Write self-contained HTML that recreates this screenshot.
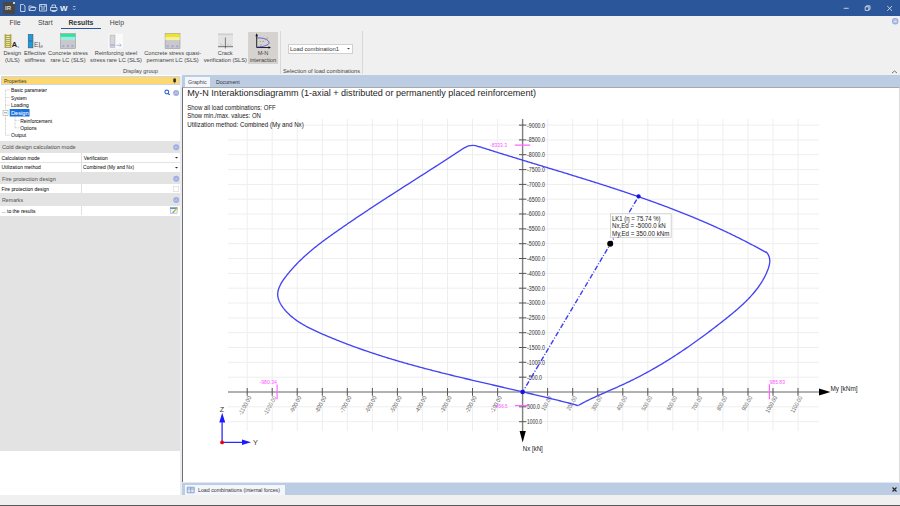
<!DOCTYPE html>
<html><head><meta charset="utf-8">
<style>
*{margin:0;padding:0;box-sizing:border-box}
html,body{width:900px;height:506px;overflow:hidden;background:#f0f0f0;font-family:"Liberation Sans",sans-serif;color:#222}
.a{position:absolute}
.t{position:absolute;white-space:nowrap;line-height:1}
#title{left:0;top:0;width:900px;height:16px;background:#2b579a}
#menu{left:0;top:16px;width:900px;height:59px;background:#f0f0f0}
.rl{position:absolute;font-size:5.7px;color:#444;text-align:center;white-space:nowrap;line-height:7.4px}
</style></head><body>
<div class="a" id="title"></div>
<!-- logo -->
<div class="a" style="left:3px;top:2px;width:12px;height:12px;background:#4a4844;border-radius:1px"></div>
<div class="t" style="left:5px;top:5px;font-size:6px;color:#ddd;font-weight:bold">IR</div>
<div class="a" style="left:12.5px;top:1.5px;width:2px;height:2px;background:#fff;border-radius:1px"></div>
<!-- quick access icons -->
<svg class="a" style="left:0;top:0" width="100" height="16" viewBox="0 0 100 16">
<g fill="none" stroke="#dfe6f2" stroke-width="0.8">
<path d="M20.5 4.5h3l1.5 1.5v5.5h-4.5z"/>
<path d="M29 6v4.5h6l1-3h-5.5l-1 3M29 6h2.5l.5 .8h2.5v.7"/>
<path d="M39.5 4.5h7v6.5h-7z M41 4.5v2.5h4v-2.5 M41 9h4"/>
<path d="M50.5 7.5h6.5v3h-6.5z M52 7.5v-2.5h3.5v2.5 M52 10.5v1h3.5v-1"/>
</g>
<text x="60" y="11" font-size="8" font-weight="bold" fill="#f2f2f2" font-family="Liberation Sans">W</text>
<path d="M73 6.5h2.5 M73 8.5l1.25 1.5 1.25-1.5" stroke="#dde" stroke-width="0.7" fill="none"/>
</svg>
<!-- window controls -->
<svg class="a" style="left:830px;top:0" width="70" height="16" viewBox="830 0 70 16">
<path d="M843.7 8.3h5" stroke="#e6ebf3" stroke-width="0.8"/>
<path d="M865.2 6.8h3.6v3.6h-3.6z M866.4 6.8v-1h3.6v3.6h-1.2" stroke="#e6ebf3" stroke-width="0.8" fill="none"/>
<path d="M887.2 6l4.8 4.8 M892 6l-4.8 4.8" stroke="#e6ebf3" stroke-width="0.8"/>
</svg>
<!-- menu tabs -->
<div class="t" style="left:9.5px;top:20.2px;font-size:6.9px;color:#444">File</div>
<div class="t" style="left:38px;top:20.2px;font-size:6.9px;color:#444">Start</div>
<div class="t" style="left:68.4px;top:20.2px;font-size:6.9px;color:#333;font-weight:bold">Results</div>
<div class="t" style="left:109.8px;top:20.2px;font-size:6.9px;color:#444">Help</div>
<div class="a" style="left:61px;top:27.8px;width:40px;height:1.4px;background:#2b579a"></div>
<!-- help icon -->
<svg class="a" style="left:890px;top:16px" width="10" height="10"><circle cx="5.2" cy="5.3" r="3.2" fill="#98a8e0"/><circle cx="5.2" cy="5.3" r="2.2" fill="#b4c4ee"/><path d="M3.9 6.2l1.3-1.4 1.3 1.4" stroke="#f2f6ff" stroke-width="0.7" fill="none"/></svg>
<svg class="a" style="left:888px;top:68px" width="12" height="8"><path d="M4 5l2.5-2 2.5 2" stroke="#555" stroke-width="0.8" fill="none"/></svg>
<div class="a" style="left:248.3px;top:32.2px;width:29.5px;height:32.2px;background:#d5d2cf"></div>
<svg class="a" style="left:0;top:30px" width="280" height="22" viewBox="0 30 280 22" font-family="Liberation Sans">
<!-- ladder -->
<g fill="#b2aa45"><rect x="4.7" y="34.2" width="1.5" height="13.8"/><rect x="9.8" y="34.2" width="1.5" height="13.8"/><rect x="4.7" y="34.8" width="6.6" height="1.2"/><rect x="4.7" y="36.8" width="6.6" height="1.2"/><rect x="4.7" y="38.8" width="6.6" height="1.2"/><rect x="4.7" y="40.8" width="6.6" height="1.2"/><rect x="4.7" y="42.8" width="6.6" height="1.2"/><rect x="4.7" y="44.8" width="6.6" height="1.2"/><rect x="4.7" y="46.8" width="6.6" height="1.2"/></g>
<text x="11.8" y="47" font-size="7.4" font-weight="bold" fill="#222">A</text>
<text x="17.2" y="48.3" font-size="3.6" fill="#555">s</text>
<!-- effective stiffness -->
<rect x="28.2" y="34.3" width="4.8" height="13.6" fill="#1c9ae2" stroke="#4c4c4c" stroke-width="0.5"/>
<path d="M29 41h3.4" stroke="#444" stroke-width="0.6"/>
<text x="34" y="47.4" font-size="6.6" fill="#555">EI</text>
<text x="39" y="48.3" font-size="3.4" fill="#555">eff</text>
<!-- concrete rare -->
<rect x="60.4" y="33.6" width="15.1" height="14.8" fill="#c9c9c9" stroke="#8a8a8a" stroke-width="0.5"/>
<rect x="60.7" y="33.9" width="14.5" height="3" fill="#2ee49b"/>
<rect x="60.7" y="36.9" width="14.5" height="3.3" fill="#9ee9e6"/>
<g fill="#a9a6e8"><circle cx="63.3" cy="46" r="1.2"/><circle cx="67.9" cy="46" r="1.2"/><circle cx="72.4" cy="46" r="1.2"/></g>
<!-- reinforcing steel -->
<rect x="108.3" y="33.8" width="14.6" height="14.7" fill="#fafafa"/>
<rect x="110" y="35" width="5" height="12.5" fill="#d6d6d6" stroke="#9a9a9a" stroke-width="0.4"/>
<rect x="110.2" y="44.2" width="4.6" height="1.8" fill="#a8b8ee"/>
<path d="M116.5 45.3h4.5M119.6 43.8l1.6 1.5-1.6 1.5" stroke="#8b8bf0" stroke-width="0.6" fill="none"/>
<!-- concrete quasi -->
<rect x="165.1" y="33.5" width="14.9" height="15" fill="#c9c9c9" stroke="#8a8a8a" stroke-width="0.5"/>
<rect x="165.4" y="33.8" width="14.3" height="3.3" fill="#efe423"/>
<rect x="165.4" y="37.1" width="14.3" height="3" fill="#f6f0a6"/>
<g fill="#a9a6e8"><circle cx="167.8" cy="46.3" r="1.2"/><circle cx="172.5" cy="46.3" r="1.2"/><circle cx="177.2" cy="46.3" r="1.2"/></g>
<!-- crack -->
<rect x="218" y="33.5" width="15" height="14.5" fill="#e3e3e3"/>
<rect x="218" y="33.5" width="15" height="1.6" fill="#cfcfcf"/>
<path d="M218 46.6H233M225.4 37.5V48.5" stroke="#333" stroke-width="0.6"/>
<path d="M221 43v3.5M223 44.5v2M228 43.5v3M230.5 44v2.5" stroke="#a8a8a8" stroke-width="0.4"/>
<!-- M-N -->
<path d="M256.7 35V47.5H269" stroke="#111" stroke-width="0.9" fill="none"/>
<path d="M255.4 36.2L256.7 33.2L258 36.2Z M268.5 46.2L271 47.5L268.5 48.8Z" fill="#111"/>
<path d="M257 38C263 37.5 268.5 39.5 269 42.5C269.5 45 263 47 257.5 46.8" stroke="#3333dd" stroke-width="0.7" fill="none"/>
<g fill="#55aa55"><circle cx="260.2" cy="41.5" r="0.6"/><circle cx="263.2" cy="41.3" r="0.6"/><circle cx="261" cy="44.8" r="0.6"/></g>
<circle cx="267.2" cy="38.3" r="0.7" fill="#e88060"/>
</svg>

<!-- ribbon labels -->
<div class="rl" style="left:-27.7px;top:49.6px;width:80px">Design<br>(ULS)</div>
<div class="rl" style="left:-5.2px;top:49.6px;width:80px">Effective<br>stiffness</div>
<div class="rl" style="left:28.0px;top:49.6px;width:80px">Concrete stress<br>rare LC (SLS)</div>
<div class="rl" style="left:76.0px;top:49.6px;width:80px">Reinforcing steel<br>stress rare LC (SLS)</div>
<div class="rl" style="left:132.7px;top:49.6px;width:80px">Concrete stress quasi-<br>permanent LC (SLS)</div>
<div class="rl" style="left:185.3px;top:49.6px;width:80px">Crack<br>verification (SLS)</div>
<div class="rl" style="left:223.0px;top:49.6px;width:80px">M-N<br>interaction</div>
<div class="rl" style="left:100.5px;top:68px;width:80px">Display group</div>
<div class="a" style="left:280px;top:31px;width:1px;height:43px;background:#d8d8d8"></div>
<div class="a" style="left:362px;top:31px;width:1px;height:43px;background:#d8d8d8"></div>
<div class="a" style="left:288.3px;top:43.6px;width:65px;height:10px;background:#fff;border:0.7px solid #d0d0d0"></div>
<div class="t" style="left:290.3px;top:45.8px;font-size:6.2px;color:#333;transform:scaleX(0.935);transform-origin:0 0">Load combination1</div>
<svg class="a" style="left:346px;top:47px" width="6" height="4"><path d="M1 1h3l-1.5 1.5z" fill="#444"/></svg>
<div class="rl" style="left:261.5px;top:68px;width:120px">Selection of load combinations</div>

<!-- LEFT PANEL -->
<div class="a" style="left:0;top:75px;width:182px;height:420px;background:#fff"></div>
<div class="a" style="left:0.8px;top:76.2px;width:179px;height:9.2px;background:#fdd86e;border:0.7px solid #c8d6e8"></div>
<div class="t" style="left:3.5px;top:78.2px;font-size:6.1px;color:#333;transform:scaleX(0.81);transform-origin:0 0">Properties</div>
<svg class="a" style="left:171px;top:77px" width="7" height="8"><path d="M2.2 1.6h2.6v3.6h-2.6z" fill="#4a4a30"/><path d="M3.9 1.6v3.6" stroke="#111" stroke-width="1"/><path d="M3.5 5.2v1.4" stroke="#555" stroke-width="0.6"/></svg>
<svg class="a" style="left:0;top:86px" width="182" height="55" viewBox="0 86 182 55">
<g stroke="#a8a8a8" stroke-width="0.6" fill="none" stroke-dasharray="0.8 0.6">
<path d="M5.5 90V135.2 M5.5 90H10 M5.5 97.6H10 M5.5 105.2H10 M5.5 135.2H10 M15 116V127.8 M15 120.3H19.5 M15 127.8H19.5"/>
</g>
<rect x="3" y="110.3" width="5" height="5" fill="#fff" stroke="#9aa" stroke-width="0.6"/>
<path d="M4 112.8H7" stroke="#555" stroke-width="0.6"/>
<rect x="9.7" y="109" width="19.8" height="7.5" fill="#1a72d9"/>
<g font-size="5.9" fill="#222" stroke="#222" stroke-width="0.05">
<text x="11" y="92.2" textLength="35.9" lengthAdjust="spacingAndGlyphs">Basic parameter</text>
<text x="11" y="99.8" textLength="15.7" lengthAdjust="spacingAndGlyphs">System</text>
<text x="11" y="107.4" textLength="17.8" lengthAdjust="spacingAndGlyphs">Loading</text>
<text x="11" y="115" fill="#fff" stroke="#fff" textLength="17.6" lengthAdjust="spacingAndGlyphs">Design</text>
<text x="20.2" y="122.5" textLength="32" lengthAdjust="spacingAndGlyphs">Reinforcement</text>
<text x="20.2" y="130" textLength="16.6" lengthAdjust="spacingAndGlyphs">Options</text>
<text x="11" y="137.4" textLength="15.1" lengthAdjust="spacingAndGlyphs">Output</text>
</g>
<circle cx="166.8" cy="92" r="1.9" fill="none" stroke="#2f6fd0" stroke-width="1.1"/>
<path d="M168.1 93.4l1.6 1.5" stroke="#3a4fc0" stroke-width="1.3"/>
<circle cx="176.1" cy="92.9" r="3" fill="#a3aee3"/>
<path d="M174.7 93.8l1.4-1.4 1.4 1.4" stroke="#d8e4fa" stroke-width="0.7" fill="none"/>
</svg>

<div class="a" style="left:0;top:141.2px;width:180.5px;height:74.3px;background:#e3e3e3"></div>
<div class="a" style="left:0;top:152.8px;width:180.5px;height:9.2px;background:#fff"></div>
<div class="a" style="left:0;top:162.8px;width:180.5px;height:8.9px;background:#fff"></div>
<div class="a" style="left:0;top:184px;width:180.5px;height:9px;background:#fff"></div>
<div class="a" style="left:0;top:205.9px;width:180.5px;height:9.3px;background:#fff"></div>
<div class="a" style="left:81.1px;top:152.8px;width:0.7px;height:19px;background:#e0e0e0"></div>
<div class="a" style="left:81.1px;top:184px;width:0.7px;height:9px;background:#e0e0e0"></div>
<div class="a" style="left:81.1px;top:205.9px;width:0.7px;height:9.3px;background:#e0e0e0"></div>
<svg class="a" style="left:0;top:140px" width="182" height="78" viewBox="0 140 182 78">
<g font-size="5.9" fill="#5e5e5e" stroke="#5e5e5e" stroke-width="0.05">
<text x="2" y="149.3" textLength="73.7" lengthAdjust="spacingAndGlyphs">Cold design calculation mode</text>
<text x="2" y="180.6" textLength="53.8" lengthAdjust="spacingAndGlyphs">Fire protection design</text>
<text x="2" y="202" textLength="21.1" lengthAdjust="spacingAndGlyphs">Remarks</text>
</g>
<g font-size="5.9" fill="#222" stroke="#222" stroke-width="0.05">
<text x="1.5" y="159.6" textLength="38.3" lengthAdjust="spacingAndGlyphs">Calculation mode</text>
<text x="1.5" y="169.3" textLength="39.2" lengthAdjust="spacingAndGlyphs">Utilization method</text>
<text x="1.5" y="190.8" textLength="47.5" lengthAdjust="spacingAndGlyphs">Fire protection design</text>
<text x="1.5" y="212.8" textLength="34.1" lengthAdjust="spacingAndGlyphs">... to the results</text>
<text x="83.7" y="159.6" textLength="24" lengthAdjust="spacingAndGlyphs">Verification</text>
<text x="83.1" y="169.3" textLength="51" lengthAdjust="spacingAndGlyphs">Combined (My and Nx)</text>
</g>
<g fill="#a3aee3"><circle cx="176.2" cy="147.2" r="3"/><circle cx="176.2" cy="178.8" r="3"/><circle cx="176.2" cy="200" r="3"/></g>
<g fill="none" stroke="#dae5fa" stroke-width="0.7"><path d="M174.8 148.1l1.4-1.4 1.4 1.4M174.8 179.7l1.4-1.4 1.4 1.4M174.8 200.9l1.4-1.4 1.4 1.4"/></g>
<path d="M175 157h3l-1.5 1.6z M175 167h3l-1.5 1.6z" fill="#222"/>
<rect x="173.5" y="186.2" width="5.2" height="5.4" fill="#fff" stroke="#d4d4d4" stroke-width="0.6"/>
<rect x="170.3" y="207.6" width="6.8" height="5.6" fill="#f4f6fa" stroke="#7d9ac8" stroke-width="0.5"/><rect x="170.3" y="207.6" width="6.8" height="1.3" fill="#4d86d0"/>
<path d="M173.3 212.2l4.2-4.6" stroke="#c9b430" stroke-width="1.3"/><path d="M172.8 212.8l0.8-1" stroke="#333" stroke-width="0.8"/>
</svg>

<div class="a" style="left:0;top:215.5px;width:180.3px;height:235px;background:#e3e3e3"></div>

<div class="a" style="left:180.2px;top:75.5px;width:1.8px;height:419.5px;background:#e9ecf1"></div>
<!-- RIGHT: tab strip -->
<div class="a" style="left:182px;top:75px;width:718px;height:12px;background:#bccde3"></div>
<div class="a" style="left:184.9px;top:76.9px;width:25px;height:10.2px;background:#f3f6fb"></div>
<div class="t" style="left:188px;top:78.8px;font-size:6.1px;color:#444;transform:scaleX(0.873);transform-origin:0 0">Graphic</div>
<div class="t" style="left:216.2px;top:78.8px;font-size:6.1px;color:#333;transform:scaleX(0.85);transform-origin:0 0">Document</div>
<!-- chart area -->
<div class="a" style="left:182px;top:87px;width:718px;height:396px;background:#fff;border-top:1px solid #a9a9a9;border-left:1.2px solid #6f6f6f;border-right:1px solid #dcdcdc"></div>
<svg class="a" style="left:0;top:0" width="900" height="506" viewBox="0 0 900 506" font-family="Liberation Sans">
<path d="M247.2 119V431 M272.2 119V431 M297.2 119V431 M322.3 119V431 M347.3 119V431 M372.4 119V431 M397.4 119V431 M422.4 119V431 M447.5 119V431 M472.5 119V431 M497.6 119V431 M522.6 119V431 M547.6 119V431 M572.7 119V431 M597.7 119V431 M622.8 119V431 M647.8 119V431 M672.8 119V431 M697.9 119V431 M722.9 119V431 M748.0 119V431 M773.0 119V431 M798.0 119V431 M228 125.1H819 M228 139.9H819 M228 154.7H819 M228 169.6H819 M228 184.4H819 M228 199.2H819 M228 214.0H819 M228 228.9H819 M228 243.7H819 M228 258.5H819 M228 273.4H819 M228 288.2H819 M228 303.0H819 M228 317.9H819 M228 332.7H819 M228 347.5H819 M228 362.3H819 M228 377.2H819 M228 392.0H819 M228 406.8H819 M228 421.7H819" stroke="#eeeeee" stroke-width="1" fill="none"/>
<text x="187.2" y="96" font-size="8.6" fill="#1e1e1e" textLength="348.8" lengthAdjust="spacingAndGlyphs">My-N Interaktionsdiagramm (1-axial + distributed or permanently placed reinforcement)</text>
<g font-size="6.5" fill="#222"><text x="187.2" y="109.8" textLength="88.6" lengthAdjust="spacingAndGlyphs">Show all load combinations: OFF</text><text x="187.2" y="118.1" textLength="73.7" lengthAdjust="spacingAndGlyphs">Show min./max. values: ON</text><text x="187.2" y="126.6" textLength="116.6" lengthAdjust="spacingAndGlyphs">Utilization method: Combined (My and Nx)</text></g>
<path d="M228 392H819" stroke="#9a9a9a" stroke-width="1.6" fill="none"/>
<path d="M522.6 119V431" stroke="#808080" stroke-width="1.4" fill="none"/>
<path d="M247.2 388V395.8 M272.2 388V395.8 M297.2 388V395.8 M322.3 388V395.8 M347.3 388V395.8 M372.4 388V395.8 M397.4 388V395.8 M422.4 388V395.8 M447.5 388V395.8 M472.5 388V395.8 M497.6 388V395.8 M547.6 388V395.8 M572.7 388V395.8 M597.7 388V395.8 M622.8 388V395.8 M647.8 388V395.8 M672.8 388V395.8 M697.9 388V395.8 M722.9 388V395.8 M748.0 388V395.8 M773.0 388V395.8 M798.0 388V395.8 M519 125.1H526.4 M519 139.9H526.4 M519 154.7H526.4 M519 169.6H526.4 M519 184.4H526.4 M519 199.2H526.4 M519 214.0H526.4 M519 228.9H526.4 M519 243.7H526.4 M519 258.5H526.4 M519 273.4H526.4 M519 288.2H526.4 M519 303.0H526.4 M519 317.9H526.4 M519 332.7H526.4 M519 347.5H526.4 M519 362.3H526.4 M519 377.2H526.4 M519 406.8H526.4 M519 421.7H526.4" stroke="#555" stroke-width="1" fill="none"/>
<path d="M819 388.5L830.5 392L819 395.5Z" fill="#000"/>
<path d="M519.6 431L525.8 431L522.7 442.6Z" fill="#000"/>
<g font-size="6.6" fill="#333"><text x="527" y="127.5" textLength="18.0" lengthAdjust="spacingAndGlyphs">-9000.0</text><text x="527" y="142.3" textLength="18.0" lengthAdjust="spacingAndGlyphs">-8500.0</text><text x="527" y="157.1" textLength="18.0" lengthAdjust="spacingAndGlyphs">-8000.0</text><text x="527" y="172.0" textLength="18.0" lengthAdjust="spacingAndGlyphs">-7500.0</text><text x="527" y="186.8" textLength="18.0" lengthAdjust="spacingAndGlyphs">-7000.0</text><text x="527" y="201.6" textLength="18.0" lengthAdjust="spacingAndGlyphs">-6500.0</text><text x="527" y="216.4" textLength="18.0" lengthAdjust="spacingAndGlyphs">-6000.0</text><text x="527" y="231.3" textLength="18.0" lengthAdjust="spacingAndGlyphs">-5500.0</text><text x="527" y="246.1" textLength="18.0" lengthAdjust="spacingAndGlyphs">-5000.0</text><text x="527" y="260.9" textLength="18.0" lengthAdjust="spacingAndGlyphs">-4500.0</text><text x="527" y="275.8" textLength="18.0" lengthAdjust="spacingAndGlyphs">-4000.0</text><text x="527" y="290.6" textLength="18.0" lengthAdjust="spacingAndGlyphs">-3500.0</text><text x="527" y="305.4" textLength="18.0" lengthAdjust="spacingAndGlyphs">-3000.0</text><text x="527" y="320.2" textLength="18.0" lengthAdjust="spacingAndGlyphs">-2500.0</text><text x="527" y="335.1" textLength="18.0" lengthAdjust="spacingAndGlyphs">-2000.0</text><text x="527" y="349.9" textLength="18.0" lengthAdjust="spacingAndGlyphs">-1500.0</text><text x="527" y="364.7" textLength="18.0" lengthAdjust="spacingAndGlyphs">-1000.0</text><text x="527" y="379.6" textLength="15.0" lengthAdjust="spacingAndGlyphs">-500.0</text><text x="527" y="409.2" textLength="13.0" lengthAdjust="spacingAndGlyphs">500.0</text><text x="527" y="424.1" textLength="15.0" lengthAdjust="spacingAndGlyphs">1000.0</text></g>
<g font-size="6" fill="#666"><text transform="translate(251.7 397.5) rotate(-61)" x="0" y="0" text-anchor="end" textLength="20.5" lengthAdjust="spacingAndGlyphs">-1100.00</text><text transform="translate(276.7 397.5) rotate(-61)" x="0" y="0" text-anchor="end" textLength="20.5" lengthAdjust="spacingAndGlyphs">-1000.00</text><text transform="translate(301.7 397.5) rotate(-61)" x="0" y="0" text-anchor="end" textLength="18.0" lengthAdjust="spacingAndGlyphs">-900.00</text><text transform="translate(326.8 397.5) rotate(-61)" x="0" y="0" text-anchor="end" textLength="18.0" lengthAdjust="spacingAndGlyphs">-800.00</text><text transform="translate(351.8 397.5) rotate(-61)" x="0" y="0" text-anchor="end" textLength="18.0" lengthAdjust="spacingAndGlyphs">-700.00</text><text transform="translate(376.9 397.5) rotate(-61)" x="0" y="0" text-anchor="end" textLength="18.0" lengthAdjust="spacingAndGlyphs">-600.00</text><text transform="translate(401.9 397.5) rotate(-61)" x="0" y="0" text-anchor="end" textLength="18.0" lengthAdjust="spacingAndGlyphs">-500.00</text><text transform="translate(426.9 397.5) rotate(-61)" x="0" y="0" text-anchor="end" textLength="18.0" lengthAdjust="spacingAndGlyphs">-400.00</text><text transform="translate(452.0 397.5) rotate(-61)" x="0" y="0" text-anchor="end" textLength="18.0" lengthAdjust="spacingAndGlyphs">-300.00</text><text transform="translate(477.0 397.5) rotate(-61)" x="0" y="0" text-anchor="end" textLength="18.0" lengthAdjust="spacingAndGlyphs">-200.00</text><text transform="translate(502.1 397.5) rotate(-61)" x="0" y="0" text-anchor="end" textLength="18.0" lengthAdjust="spacingAndGlyphs">-100.00</text><text transform="translate(552.1 397.5) rotate(-61)" x="0" y="0" text-anchor="end" textLength="15.5" lengthAdjust="spacingAndGlyphs">100.00</text><text transform="translate(577.2 397.5) rotate(-61)" x="0" y="0" text-anchor="end" textLength="15.5" lengthAdjust="spacingAndGlyphs">200.00</text><text transform="translate(602.2 397.5) rotate(-61)" x="0" y="0" text-anchor="end" textLength="15.5" lengthAdjust="spacingAndGlyphs">300.00</text><text transform="translate(627.3 397.5) rotate(-61)" x="0" y="0" text-anchor="end" textLength="15.5" lengthAdjust="spacingAndGlyphs">400.00</text><text transform="translate(652.3 397.5) rotate(-61)" x="0" y="0" text-anchor="end" textLength="15.5" lengthAdjust="spacingAndGlyphs">500.00</text><text transform="translate(677.3 397.5) rotate(-61)" x="0" y="0" text-anchor="end" textLength="15.5" lengthAdjust="spacingAndGlyphs">600.00</text><text transform="translate(702.4 397.5) rotate(-61)" x="0" y="0" text-anchor="end" textLength="15.5" lengthAdjust="spacingAndGlyphs">700.00</text><text transform="translate(727.4 397.5) rotate(-61)" x="0" y="0" text-anchor="end" textLength="15.5" lengthAdjust="spacingAndGlyphs">800.00</text><text transform="translate(752.5 397.5) rotate(-61)" x="0" y="0" text-anchor="end" textLength="15.5" lengthAdjust="spacingAndGlyphs">900.00</text><text transform="translate(777.5 397.5) rotate(-61)" x="0" y="0" text-anchor="end" textLength="18.0" lengthAdjust="spacingAndGlyphs">1000.00</text><text transform="translate(802.5 397.5) rotate(-61)" x="0" y="0" text-anchor="end" textLength="18.0" lengthAdjust="spacingAndGlyphs">1100.00</text></g>
<path d="M277.1 384.4V399.2M769.4 384.2V399.3M515 405.6H529.4M514.8 145.2H530.2" stroke="#ff66ff" stroke-width="1.2" fill="none"/>
<g font-size="6" fill="#ff55ff"><text x="259.5" y="383.5" textLength="17.5" lengthAdjust="spacingAndGlyphs">-980.34</text><text x="769.5" y="383.5" textLength="15.5" lengthAdjust="spacingAndGlyphs">985.83</text><text x="494.5" y="407.8" textLength="13" lengthAdjust="spacingAndGlyphs">-456.5</text><text x="490" y="147" textLength="17" lengthAdjust="spacingAndGlyphs">-8333.3</text></g>
<path d="M578.25 405.58 577.15 405.28 576.06 404.99 574.96 404.70 573.86 404.41 572.77 404.13 571.67 403.84 570.57 403.55 569.47 403.27 568.38 402.98 567.28 402.70 566.18 402.42 565.08 402.14 563.97 401.85 562.87 401.57 561.77 401.30 560.67 401.02 559.57 400.74 558.46 400.46 557.36 400.19 556.26 399.91 555.15 399.64 554.05 399.36 552.94 399.09 551.84 398.82 550.73 398.55 549.62 398.27 548.52 398.00 547.41 397.73 546.30 397.46 545.19 397.20 544.08 396.93 542.98 396.66 541.87 396.39 540.76 396.13 539.65 395.86 538.54 395.59 537.43 395.33 536.32 395.07 535.21 394.80 534.10 394.54 532.98 394.27 531.87 394.01 530.76 393.75 529.65 393.49 528.54 393.23 527.42 392.97 526.31 392.70 525.20 392.44 524.08 392.18 522.97 391.92 521.86 391.66 520.74 391.40 519.63 391.15 518.52 390.89 517.40 390.63 516.29 390.37 515.17 390.11 514.06 389.85 512.94 389.60 511.83 389.34 510.71 389.08 509.60 388.82 508.48 388.57 507.36 388.31 506.25 388.05 505.13 387.80 504.02 387.54 502.90 387.28 501.79 387.02 500.67 386.77 499.55 386.51 498.44 386.25 497.32 386.00 496.20 385.74 495.09 385.48 493.97 385.23 492.86 384.97 491.74 384.71 490.62 384.45 489.51 384.20 488.39 383.94 487.27 383.68 486.16 383.42 485.04 383.16 483.93 382.91 482.81 382.65 481.69 382.39 480.58 382.13 479.46 381.87 478.35 381.61 477.23 381.35 476.12 381.09 475.00 380.83 473.88 380.57 472.77 380.31 471.65 380.05 470.54 379.78 469.42 379.52 468.31 379.26 467.20 378.99 466.08 378.73 464.97 378.47 463.85 378.20 462.74 377.94 461.63 377.67 460.51 377.41 459.40 377.14 458.29 376.87 457.17 376.60 456.06 376.34 454.95 376.07 453.84 375.80 452.73 375.53 451.62 375.26 450.50 374.98 449.39 374.71 448.28 374.44 447.17 374.17 446.06 373.89 444.95 373.62 443.84 373.34 442.74 373.07 441.63 372.79 440.52 372.51 439.41 372.23 438.30 371.95 437.20 371.67 436.09 371.39 434.98 371.11 433.88 370.83 432.77 370.54 431.67 370.26 430.56 369.97 429.46 369.69 428.35 369.40 427.25 369.11 426.15 368.82 425.04 368.53 423.94 368.24 422.84 367.95 421.74 367.65 420.64 367.36 419.54 367.06 418.44 366.77 417.34 366.47 416.24 366.17 415.14 365.87 414.04 365.57 412.94 365.27 411.85 364.97 410.75 364.66 409.66 364.36 408.56 364.05 407.47 363.74 406.37 363.43 405.28 363.12 404.19 362.81 403.09 362.50 402.00 362.18 400.91 361.87 399.82 361.55 398.73 361.23 397.64 360.91 396.55 360.59 395.47 360.27 394.38 359.95 393.29 359.62 392.21 359.30 391.12 358.97 390.04 358.64 388.95 358.31 387.87 357.98 386.78 357.64 385.70 357.31 384.62 356.97 383.54 356.63 382.46 356.29 381.38 355.95 380.30 355.60 379.22 355.26 378.14 354.91 377.06 354.56 375.98 354.21 374.90 353.86 373.82 353.51 372.75 353.15 371.67 352.79 370.59 352.43 369.52 352.07 368.44 351.71 367.37 351.35 366.29 350.98 365.22 350.61 364.14 350.24 363.07 349.87 362.00 349.49 360.92 349.12 359.85 348.74 358.78 348.36 357.71 347.97 356.63 347.59 355.56 347.20 354.49 346.81 353.42 346.42 352.35 346.03 351.28 345.63 350.21 345.23 349.13 344.83 348.06 344.43 346.99 344.03 345.92 343.62 344.85 343.21 343.78 342.80 342.71 342.39 341.64 341.97 340.58 341.55 339.51 341.13 338.44 340.71 337.37 340.28 336.30 339.85 335.23 339.42 334.16 338.99 333.09 338.55 332.02 338.11 330.95 337.67 329.88 337.23 328.82 336.78 327.75 336.34 326.68 335.88 325.61 335.43 324.54 334.97 323.47 334.51 322.40 334.05 321.33 333.59 320.26 333.12 319.19 332.65 318.13 332.17 317.06 331.69 316.00 331.21 314.94 330.72 313.88 330.22 312.83 329.72 311.78 329.21 310.73 328.70 309.69 328.18 308.66 327.65 307.63 327.11 306.60 326.56 305.59 326.01 304.57 325.45 303.57 324.87 302.58 324.29 301.59 323.70 300.61 323.10 299.64 322.48 298.68 321.86 297.73 321.22 296.78 320.57 295.85 319.91 294.94 319.23 294.03 318.54 293.13 317.84 292.25 317.12 291.38 316.39 290.52 315.65 289.68 314.89 288.85 314.11 288.03 313.32 287.23 312.51 286.45 311.68 285.68 310.84 284.92 309.97 284.19 309.10 283.48 308.20 282.79 307.29 282.14 306.37 281.51 305.44 280.92 304.49 280.37 303.53 279.87 302.56 279.40 301.58 278.99 300.60 278.63 299.60 278.32 298.60 278.08 297.60 277.89 296.59 277.77 295.58 277.72 294.56 277.74 293.55 277.83 292.53 277.98 291.51 278.19 290.50 278.46 289.48 278.79 288.47 279.17 287.45 279.60 286.44 280.07 285.44 280.58 284.43 281.13 283.43 281.72 282.44 282.34 281.45 282.99 280.46 283.66 279.48 284.35 278.51 285.06 277.54 285.79 276.59 286.53 275.64 287.27 274.69 288.02 273.76 288.78 272.84 289.54 271.92 290.31 271.02 291.08 270.12 291.86 269.23 292.65 268.35 293.43 267.48 294.23 266.61 295.02 265.76 295.83 264.91 296.63 264.06 297.44 263.23 298.26 262.40 299.08 261.58 299.91 260.77 300.73 259.96 301.57 259.16 302.40 258.37 303.24 257.58 304.09 256.80 304.94 256.02 305.79 255.25 306.64 254.49 307.50 253.73 308.37 252.98 309.23 252.23 310.10 251.49 310.97 250.75 311.85 250.02 312.73 249.29 313.61 248.57 314.49 247.85 315.38 247.14 316.27 246.43 317.16 245.72 318.06 245.02 318.96 244.32 319.86 243.63 320.76 242.94 321.66 242.25 322.57 241.57 323.48 240.89 324.39 240.21 325.30 239.53 326.22 238.86 327.13 238.19 328.05 237.52 328.97 236.85 329.89 236.19 330.82 235.53 331.74 234.87 332.67 234.21 333.59 233.55 334.52 232.90 335.45 232.24 336.38 231.59 337.31 230.93 338.24 230.28 339.17 229.63 340.10 228.98 341.04 228.33 341.97 227.68 342.91 227.04 343.84 226.39 344.78 225.74 345.72 225.10 346.66 224.45 347.60 223.81 348.53 223.16 349.48 222.52 350.42 221.88 351.36 221.24 352.30 220.60 353.24 219.96 354.19 219.32 355.13 218.68 356.08 218.04 357.02 217.41 357.97 216.77 358.92 216.13 359.86 215.50 360.81 214.86 361.76 214.23 362.71 213.60 363.66 212.96 364.61 212.33 365.56 211.70 366.51 211.07 367.46 210.44 368.42 209.81 369.37 209.18 370.32 208.55 371.28 207.92 372.23 207.29 373.19 206.67 374.14 206.04 375.10 205.41 376.05 204.79 377.01 204.16 377.97 203.54 378.92 202.91 379.88 202.29 380.84 201.66 381.80 201.04 382.75 200.42 383.71 199.79 384.67 199.17 385.63 198.55 386.59 197.93 387.55 197.30 388.51 196.68 389.47 196.06 390.43 195.44 391.39 194.82 392.36 194.20 393.32 193.58 394.28 192.96 395.24 192.34 396.20 191.72 397.17 191.11 398.13 190.49 399.09 189.87 400.05 189.25 401.02 188.63 401.98 188.02 402.94 187.40 403.91 186.78 404.87 186.16 405.83 185.55 406.80 184.93 407.76 184.31 408.72 183.70 409.69 183.08 410.65 182.46 411.62 181.85 412.58 181.23 413.54 180.61 414.51 180.00 415.47 179.38 416.43 178.77 417.40 178.15 418.36 177.53 419.32 176.92 420.29 176.30 421.25 175.69 422.21 175.07 423.18 174.45 424.14 173.84 425.10 173.22 426.07 172.61 427.03 171.99 427.99 171.37 428.95 170.76 429.92 170.14 430.88 169.52 431.84 168.91 432.80 168.29 433.76 167.67 434.72 167.06 435.68 166.44 436.64 165.82 437.60 165.20 438.56 164.59 439.52 163.97 440.48 163.35 441.44 162.73 442.40 162.11 443.36 161.49 444.32 160.87 445.27 160.26 446.23 159.64 447.19 159.02 448.15 158.40 449.10 157.77 450.06 157.15 451.01 156.53 451.97 155.91 452.92 155.29 453.88 154.67 454.83 154.04 455.78 153.42 456.73 152.80 457.69 152.17 458.64 151.55 459.59 150.93 460.54 150.30 461.49 149.68 462.44 149.05 463.39 148.42 464.34 147.80 Q471.5 143.6 479 146.8 L479.11 146.60 480.09 146.91 481.06 147.22 482.03 147.53 483.00 147.85 483.98 148.16 484.95 148.47 485.92 148.78 486.90 149.09 487.87 149.39 488.85 149.70 489.82 150.01 490.80 150.32 491.77 150.63 492.75 150.93 493.72 151.24 494.70 151.55 495.67 151.85 496.65 152.16 497.62 152.46 498.60 152.77 499.58 153.07 500.55 153.38 501.53 153.68 502.51 153.98 503.49 154.29 504.46 154.59 505.44 154.89 506.42 155.19 507.40 155.50 508.37 155.80 509.35 156.10 510.33 156.40 511.31 156.70 512.29 157.00 513.26 157.30 514.24 157.61 515.22 157.91 516.20 158.21 517.18 158.51 518.16 158.80 519.14 159.10 520.12 159.40 521.10 159.70 522.08 160.00 523.06 160.30 524.04 160.60 525.02 160.90 526.00 161.20 526.98 161.50 527.96 161.79 528.94 162.09 529.92 162.39 530.90 162.69 531.88 162.99 532.86 163.28 533.84 163.58 534.82 163.88 535.80 164.18 536.78 164.47 537.76 164.77 538.74 165.07 539.73 165.37 540.71 165.66 541.69 165.96 542.67 166.26 543.65 166.56 544.63 166.86 545.61 167.15 546.59 167.45 547.57 167.75 548.56 168.05 549.54 168.34 550.52 168.64 551.50 168.94 552.48 169.24 553.46 169.54 554.44 169.83 555.42 170.13 556.41 170.43 557.39 170.73 558.37 171.03 559.35 171.33 560.33 171.63 561.31 171.92 562.29 172.22 563.27 172.52 564.25 172.82 565.24 173.12 566.22 173.42 567.20 173.72 568.18 174.02 569.16 174.32 570.14 174.62 571.12 174.93 572.10 175.23 573.08 175.53 574.06 175.83 575.04 176.13 576.02 176.43 577.00 176.74 577.98 177.04 578.96 177.34 579.94 177.65 580.92 177.95 581.90 178.25 582.88 178.56 583.86 178.86 584.84 179.17 585.82 179.47 586.80 179.78 587.78 180.09 588.76 180.39 589.74 180.70 590.71 181.01 591.69 181.31 592.67 181.62 593.65 181.93 594.63 182.24 595.61 182.55 596.58 182.86 597.56 183.17 598.54 183.48 599.52 183.79 600.49 184.10 601.47 184.41 602.45 184.72 603.42 185.04 604.40 185.35 605.38 185.66 606.35 185.98 607.33 186.29 608.30 186.61 609.28 186.92 610.26 187.24 611.23 187.56 612.21 187.87 613.18 188.19 614.16 188.51 615.13 188.83 616.10 189.15 617.08 189.47 618.05 189.79 619.03 190.11 620.00 190.43 620.97 190.75 621.94 191.08 622.92 191.40 623.89 191.73 624.86 192.05 625.83 192.38 626.80 192.70 627.78 193.03 628.75 193.36 629.72 193.69 630.69 194.02 631.66 194.34 632.63 194.68 633.60 195.01 634.57 195.34 635.54 195.67 636.51 196.00 637.47 196.34 638.44 196.67 639.41 197.01 640.38 197.35 641.35 197.68 642.31 198.02 643.28 198.36 644.25 198.70 645.21 199.04 646.18 199.38 647.14 199.72 648.11 200.06 649.07 200.41 650.04 200.75 651.00 201.10 651.97 201.44 652.93 201.79 653.89 202.14 654.86 202.49 655.82 202.84 656.78 203.19 657.74 203.54 658.71 203.89 659.67 204.25 660.63 204.60 661.59 204.95 662.55 205.31 663.51 205.67 664.47 206.03 665.42 206.38 666.38 206.74 667.34 207.10 668.30 207.47 669.26 207.83 670.21 208.19 671.17 208.56 672.13 208.92 673.08 209.29 674.04 209.66 674.99 210.03 675.95 210.40 676.90 210.77 677.85 211.14 678.81 211.51 679.76 211.89 680.71 212.26 681.66 212.64 682.61 213.02 683.57 213.40 684.52 213.78 685.47 214.16 686.42 214.54 687.37 214.92 688.31 215.31 689.26 215.69 690.21 216.08 691.16 216.46 692.10 216.85 693.05 217.24 694.00 217.63 694.94 218.03 695.89 218.42 696.83 218.82 697.77 219.21 698.72 219.61 699.66 220.01 700.60 220.41 701.54 220.81 702.49 221.21 703.43 221.61 704.37 222.02 705.31 222.42 706.25 222.83 707.18 223.24 708.12 223.65 709.06 224.06 710.00 224.47 710.93 224.89 711.87 225.30 712.81 225.72 713.74 226.14 714.67 226.56 715.61 226.98 716.54 227.40 717.47 227.82 718.41 228.25 719.34 228.67 720.27 229.10 721.20 229.53 722.13 229.96 723.06 230.39 723.99 230.83 724.91 231.26 725.84 231.70 726.77 232.13 727.70 232.57 728.62 233.01 729.55 233.46 730.47 233.90 731.39 234.34 732.32 234.79 733.24 235.24 734.16 235.69 735.08 236.14 736.00 236.59 736.92 237.05 737.84 237.50 738.76 237.96 739.68 238.42 740.60 238.88 741.51 239.34 742.43 239.80 743.35 240.27 744.26 240.73 745.17 241.20 746.09 241.67 747.00 242.14 747.91 242.62 748.82 243.09 749.74 243.57 750.65 244.05 751.55 244.53 752.46 245.01 753.37 245.49 754.28 245.97 755.19 246.46 756.09 246.95 757.00 247.44 757.90 247.93 758.80 248.42 759.71 248.92 760.61 249.41 761.51 249.91 762.41 250.41 763.31 250.92 764.21 251.42 765.11 251.92 766.01 252.43 L766.36 252.05 767.29 253.22 768.05 254.40 768.66 255.59 769.13 256.79 769.46 258.00 769.67 259.22 769.77 260.44 769.76 261.66 769.66 262.89 769.48 264.12 769.22 265.34 768.90 266.56 768.53 267.77 768.11 268.98 767.66 270.17 767.19 271.35 766.70 272.52 766.19 273.68 765.65 274.83 765.10 275.97 764.53 277.09 763.93 278.21 763.32 279.31 762.70 280.40 762.05 281.48 761.39 282.56 760.71 283.62 760.01 284.67 759.30 285.71 758.57 286.74 757.83 287.77 757.07 288.78 756.30 289.79 755.51 290.78 754.71 291.77 753.90 292.75 753.07 293.72 752.23 294.68 751.38 295.64 750.52 296.59 749.65 297.53 748.76 298.46 747.87 299.39 746.96 300.31 746.05 301.22 745.12 302.13 744.19 303.03 743.25 303.92 742.30 304.81 741.34 305.69 740.38 306.57 739.41 307.44 738.43 308.30 737.45 309.16 736.46 310.02 735.47 310.87 734.47 311.72 733.46 312.56 732.46 313.40 731.44 314.24 730.43 315.07 729.41 315.89 728.39 316.72 727.37 317.54 726.35 318.36 725.33 319.18 724.30 319.99 723.28 320.80 722.25 321.61 721.23 322.42 720.20 323.22 719.17 324.02 718.15 324.82 717.12 325.62 716.09 326.41 715.06 327.21 714.04 328.00 713.01 328.78 711.98 329.57 710.95 330.35 709.92 331.13 708.89 331.91 707.86 332.69 706.82 333.46 705.79 334.23 704.76 335.00 703.72 335.77 702.69 336.53 701.65 337.29 700.61 338.05 699.57 338.81 698.54 339.56 697.50 340.31 696.45 341.06 695.41 341.80 694.37 342.55 693.33 343.29 692.28 344.02 691.23 344.76 690.19 345.49 689.14 346.22 688.09 346.95 687.04 347.67 685.98 348.39 684.93 349.11 683.87 349.83 682.82 350.54 681.76 351.25 680.70 351.96 679.64 352.67 678.58 353.37 677.51 354.07 676.45 354.76 675.38 355.46 674.31 356.15 673.24 356.84 672.17 357.52 671.09 358.20 670.02 358.88 668.94 359.56 667.86 360.23 666.78 360.90 665.70 361.57 664.61 362.23 663.53 362.90 662.44 363.55 661.35 364.21 660.25 364.86 659.16 365.51 658.06 366.16 656.96 366.80 655.86 367.44 654.76 368.08 653.65 368.71 652.54 369.34 651.43 369.97 650.32 370.59 649.20 371.22 648.09 371.83 646.97 372.45 645.84 373.06 644.72 373.67 643.59 374.27 642.46 374.88 641.33 375.48 640.20 376.07 639.06 376.66 637.92 377.25 636.77 377.84 635.63 378.42 634.48 379.00 633.33 379.57 632.18 380.15 631.02 380.72 629.86 381.28 628.70 381.84 627.53 382.40 626.36 382.96 625.19 383.51 624.02 384.06 622.84 384.60 621.66 385.14 620.48 385.68 619.29 386.22 618.10 386.75 616.91 387.28 615.72 387.81 614.53 388.34 613.34 388.86 612.14 389.39 610.95 389.91 609.76 390.44 608.56 390.96 607.37 391.48 606.17 392.00 604.98 392.53 603.79 393.05 602.60 393.58 601.41 394.10 600.23 394.63 599.04 395.16 597.86 395.70 596.68 396.23 595.51 396.77 594.34 397.31 593.17 397.85 592.01 398.40 590.85 398.95 589.69 399.51 588.54 400.07 587.39 400.63 586.25 401.20 585.12 401.77 583.99 402.35 582.87 402.94 581.75 403.53 580.64 404.13 579.54 404.73 578.45 405.35" stroke="#4444f4" stroke-width="1.35" fill="none" stroke-linejoin="round"/>
<path d="M522.6 392L638.6 196.4" stroke="#3c3cf5" stroke-width="1.4" fill="none" stroke-dasharray="5 1.8 1 1.8" stroke-dashoffset="2.2"/>
<circle cx="522.6" cy="392" r="2.3" fill="#1515e0"/><circle cx="638.6" cy="196.4" r="2.1" fill="#1515e0"/><circle cx="610.2" cy="243.8" r="3" fill="#000"/>
<rect x="610.5" y="213.8" width="60.7" height="23.5" fill="#fff" stroke="#c8c8c8" stroke-width="0.8"/>
<g font-size="6.6" fill="#222"><text x="612" y="220.6" textLength="48.6" lengthAdjust="spacingAndGlyphs">LK1 (η = 75.74 %)</text><text x="612" y="228.2" textLength="53.8" lengthAdjust="spacingAndGlyphs">Nx,Ed = -5000.0 kN</text><text x="612" y="235.8" textLength="57.4" lengthAdjust="spacingAndGlyphs">My,Ed = 350.00 kNm</text></g>
<text x="830.5" y="391" font-size="7" fill="#222" textLength="27" lengthAdjust="spacingAndGlyphs">My [kNm]</text>
<text x="522.8" y="451" font-size="7" fill="#222" textLength="20" lengthAdjust="spacingAndGlyphs">Nx [kN]</text>
<path d="M222.1 442.4V422.3M222.1 442.4H242" stroke="#2a2aff" stroke-width="1.3"/><path d="M219.3 422.5L222.2 412.8L225.2 422.5Z M242 439.5L251 442.2L242 444.9Z" fill="#1a1aff"/><circle cx="222.1" cy="442.4" r="1.9" fill="#e00"/>
<text x="219.8" y="411.7" font-size="7.2" fill="#333">Z</text><text x="253" y="445" font-size="7.2" fill="#333">Y</text>
</svg>
<!-- bottom strip -->
<div class="a" style="left:182px;top:482px;width:718px;height:13px;background:#bccde3;border-top:1.3px solid #dfe8f3"></div>
<div class="a" style="left:184.7px;top:485.3px;width:100px;height:9.7px;background:#f3f6fb"></div>
<svg class="a" style="left:186px;top:486px" width="10" height="8"><path d="M1.2 1.2h7v5.6h-7z" fill="#dbe6f5" stroke="#6b8ac4" stroke-width="0.7"/><path d="M1.2 3h7M4.7 1.2v5.6" stroke="#6b8ac4" stroke-width="0.6"/></svg>
<div class="t" style="left:198px;top:487.3px;font-size:6.1px;color:#333;transform:scaleX(0.861);transform-origin:0 0">Load combinations (internal forces)</div>
<svg class="a" style="left:890px;top:485px" width="10" height="9"><path d="M2.5 2.5l4 4M6.5 2.5l-4 4" stroke="#222" stroke-width="1.1"/></svg>
<!-- status bar -->
<div class="a" style="left:0;top:495px;width:900px;height:10px;background:#f0f0f0"></div>
<div class="a" style="left:0;top:504.8px;width:900px;height:1.2px;background:#5a5a5a"></div>
</body></html>
